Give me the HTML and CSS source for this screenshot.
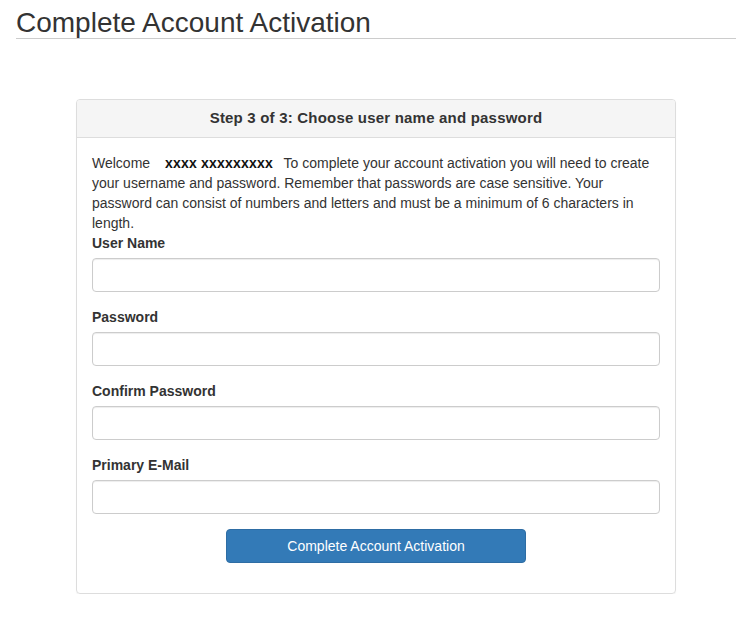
FILE: index.html
```html
<!DOCTYPE html>
<html>
<head>
<meta charset="utf-8">
<title>Complete Account Activation</title>
<link rel="stylesheet" href="styles.css">
</head>
<body>
<div class="page-header">
  <h1 class="title">Complete Account Activation</h1>
</div>
<div class="panel">
  <div class="panel-heading">Step 3 of 3: Choose user name and password</div>
  <div class="panel-body">
    <p class="intro">Welcome <span class="name">xxxx xxxxxxxxx</span> To complete your account activation you will need to create your username and password. Remember that passwords are case sensitive. Your password can consist of numbers and letters and must be a minimum of 6 characters in length.</p>
    <div class="form-group">
      <label class="label" for="u">User Name</label>
      <input class="input" id="u" type="text">
    </div>
    <div class="form-group">
      <label class="label" for="p">Password</label>
      <input class="input" id="p" type="password">
    </div>
    <div class="form-group">
      <label class="label" for="c">Confirm Password</label>
      <input class="input" id="c" type="password">
    </div>
    <div class="form-group">
      <label class="label" for="e">Primary E-Mail</label>
      <input class="input" id="e" type="text">
    </div>
    <div class="actions">
      <button class="btn" type="button">Complete Account Activation</button>
    </div>
  </div>
</div>
</body>
</html>
```
FILE: styles.css
```css
html, body {
  margin: 0;
  padding: 0;
  background: #fff;
}
body {
  font-family: "Liberation Sans", Arial, sans-serif;
  font-size: 14px;
  line-height: 20px;
  color: #333;
}
.page-header {
  margin-left: 16px;
  border-bottom: 1px solid #ccc;
  padding-top: 7px;
}
.title {
  margin: 0;
  font-size: 28px;
  line-height: 31px;
  font-weight: normal;
  color: #333;
}
.panel {
  width: 598px;
  margin: 60px 0 0 76px;
  border: 1px solid #ddd;
  border-radius: 4px;
  box-shadow: 0 1px 1px rgba(0,0,0,0.05);
}
.panel-heading {
  background: #f5f5f5;
  border-bottom: 1px solid #ddd;
  border-radius: 3px 3px 0 0;
  text-align: center;
  font-weight: bold;
  font-size: 15px;
  letter-spacing: 0.2px;
  line-height: 20px;
  padding: 8px 15px 9px;
  color: #333;
}
.panel-body {
  padding: 15px 15px 15px;
}
.intro {
  margin: 0;
}
.name {
  font-weight: bold;
  font-size: 14px;
  letter-spacing: 0.2px;
  margin: 0 7px 0 11px;
  color: #111;
}
.form-group {
  display: flex;
  flex-direction: column;
  margin-bottom: 15px;
}
.label {
  font-weight: bold;
  margin-bottom: 5px;
}
.input {
  box-sizing: border-box;
  height: 34px;
  width: 100%;
  border: 1px solid #ccc;
  border-radius: 4px;
  box-shadow: inset 0 1px 1px rgba(0,0,0,0.075);
  padding: 6px 12px;
  font-family: inherit;
  font-size: 14px;
  margin: 0;
}
.actions {
  display: flex;
  justify-content: center;
  margin-bottom: 15px;
}
.btn {
  box-sizing: border-box;
  width: 300px;
  height: 34px;
  background: #337ab7;
  border: 1px solid #2e6da4;
  border-radius: 4px;
  color: #fff;
  font-family: "Liberation Sans", Arial, sans-serif;
  font-size: 14px;
  padding: 6px 12px;
}
```
